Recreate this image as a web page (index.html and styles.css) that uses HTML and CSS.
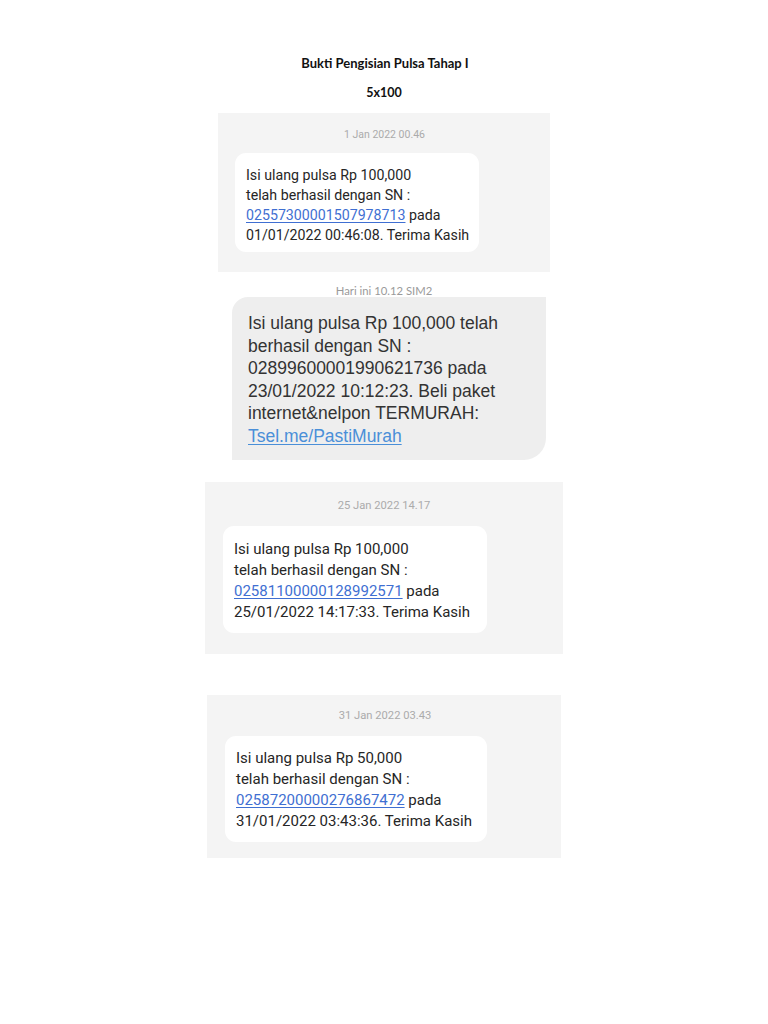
FILE: index.html
```html
<!DOCTYPE html>
<html lang="id">
<head>
<meta charset="utf-8">
<title>Bukti Pengisian Pulsa Tahap I</title>
<link rel="stylesheet" href="styles.css">
</head>
<body>
<main class="page">
  <h1 class="title">Bukti Pengisian Pulsa Tahap I</h1>
  <p class="subtitle">5x100</p>

  <section class="panel panel-1">
    <div class="stamp">1 Jan 2022 00.46</div>
    <div class="bubble bubble-1">Isi ulang pulsa Rp 100,000<br>telah berhasil dengan SN :<br><a class="sn" href="#">02557300001507978713</a> pada<br>01/01/2022 00:46:08. Terima Kasih</div>
  </section>

  <section class="sim">
    <div class="sim-stamp">Hari ini 10.12 SIM2</div>
    <div class="sim-bubble">Isi ulang pulsa Rp 100,000 telah<br>berhasil dengan SN :<br>02899600001990621736 pada<br>23/01/2022 10:12:23. Beli paket<br>internet&amp;nelpon TERMURAH:<br><a class="sim-link" href="#">Tsel.me/PastiMurah</a></div>
  </section>

  <section class="panel panel-3">
    <div class="stamp">25 Jan 2022 14.17</div>
    <div class="bubble bubble-3">Isi ulang pulsa Rp 100,000<br>telah berhasil dengan SN :<br><a class="sn" href="#">02581100000128992571</a> pada<br>25/01/2022 14:17:33. Terima Kasih</div>
  </section>

  <section class="panel panel-4">
    <div class="stamp">31 Jan 2022 03.43</div>
    <div class="bubble bubble-4">Isi ulang pulsa Rp 50,000<br>telah berhasil dengan SN :<br><a class="sn" href="#">02587200000276867472</a> pada<br>31/01/2022 03:43:36. Terima Kasih</div>
  </section>
</main>
</body>
</html>
```

FILE: styles.css
```css
html, body {
  margin: 0;
  padding: 0;
  background: #ffffff;
}

.page {
  padding-top: 55px;
  display: flex;
  flex-direction: column;
  align-items: flex-start;
}

.title,
.subtitle {
  align-self: center;
  margin: 0;
  font-family: Lato, "Open Sans", sans-serif;
  font-weight: 700;
  font-size: 12.5px;
  line-height: 16px;
  color: #111111;
}

.title {
  font-size: 13px;
  transform: translateX(1px);
}

.subtitle {
  margin-top: 14px;
}

.panel {
  background: #f4f4f4;
  display: flex;
  flex-direction: column;
  box-sizing: border-box;
}

.stamp {
  align-self: center;
  font-family: Roboto, "Liberation Sans", sans-serif;
  font-size: 10.5px;
  line-height: 14px;
  color: #ababab;
}

.bubble {
  background: #ffffff;
  border-radius: 11px;
  font-family: Roboto, "Liberation Sans", sans-serif;
  color: #262626;
  box-sizing: border-box;
}

.sn {
  color: #3f6fd2;
  text-decoration: underline;
  text-decoration-thickness: 1px;
  text-underline-offset: 2px;
}

/* card 1 */
.panel-1 {
  margin-top: 12px;
  margin-left: 218px;
  width: 332px;
  padding: 15px 0 20px 17px;
}
.panel-1 .stamp { transform: translateX(-8px); }
.bubble-1 {
  margin-top: 11px;
  width: 244px;
  padding: 12px 6px 7px 11px;
  font-size: 14.2px;
  line-height: 20px;
}

/* SIM2 */
.sim {
  margin-top: 13px;
  margin-left: 232px;
  width: 314px;
  display: flex;
  flex-direction: column;
}
.sim-stamp {
  align-self: center;
  font-family: Lato, "Open Sans", sans-serif;
  font-size: 11.3px;
  line-height: 12px;
  color: #9a9a9a;
  transform: translateX(-5px);
}
.sim-bubble {
  background: #eeeeee;
  border-radius: 16px 0 22px 0;
  padding: 15px 8px 13px 16px;
  font-family: "Liberation Sans", Arial, sans-serif;
  font-size: 17.5px;
  line-height: 22.5px;
  color: #333333;
}
.sim-link {
  color: #4a8fd8;
  text-decoration: underline;
  text-underline-offset: 2px;
}

/* card 3 */
.panel-3 {
  margin-top: 22px;
  margin-left: 205px;
  width: 358px;
  padding: 17px 0 21px 18px;
}
.panel-3 .stamp { font-size: 11.2px; transform: translateX(-9px); }
.bubble-3 {
  margin-top: 13px;
  width: 264px;
  padding: 13px 6px 10px 11px;
  font-size: 15px;
  line-height: 21px;
}

/* card 4 */
.panel-4 {
  margin-top: 41px;
  margin-left: 207px;
  width: 354px;
  padding: 14px 0 16px 18px;
}
.panel-4 .stamp { font-size: 11.2px; transform: translateX(-8px); }
.bubble-4 {
  margin-top: 13px;
  width: 262px;
  padding: 12px 6px 10px 11px;
  font-size: 15px;
  line-height: 21px;
}
```
